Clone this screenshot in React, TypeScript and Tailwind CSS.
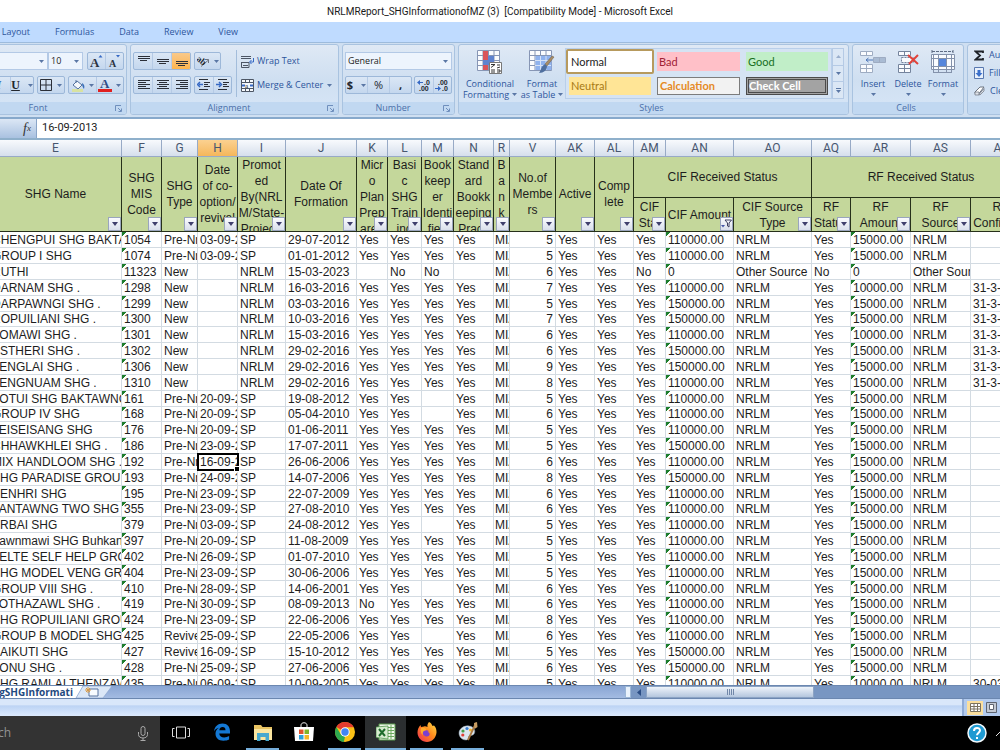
import React from "react";

/* ---------- data ---------- */

type Column = { id: string; width: number };

const columns: Column[] = [
  { id: "E", width: 132 },
  { id: "F", width: 40 },
  { id: "G", width: 36 },
  { id: "H", width: 40 },
  { id: "I", width: 48 },
  { id: "J", width: 71 },
  { id: "K", width: 31 },
  { id: "L", width: 34 },
  { id: "M", width: 32 },
  { id: "N", width: 40 },
  { id: "R", width: 16 },
  { id: "V", width: 46 },
  { id: "AK", width: 39 },
  { id: "AL", width: 39 },
  { id: "AM", width: 32 },
  { id: "AN", width: 68 },
  { id: "AO", width: 78 },
  { id: "AQ", width: 39 },
  { id: "AR", width: 60 },
  { id: "AS", width: 60 },
  { id: "AT", width: 60 },
];

// name, MIS code, type, revival date, formation date, plan/training/bookkeeper/practice flags, members, CIF amount, RF amount, RF date
const source = `CHENGPUI SHG BAKTAWNG|1054|P|03-09-2013|29-07-2012|YYYY|5|110000.00|15000.00|
GROUP I SHG|1074|P|03-09-2013|01-01-2012|YYYY|5|110000.00|15000.00|
RUTHI|11323|N||15-03-2023|-NN-|6|0|0|
DARNAM SHG .|1298|N||16-03-2016|YYYY|7|110000.00|10000.00|31-3-2017
DARPAWNGI SHG .|1299|N||03-03-2016|YYYY|5|150000.00|15000.00|31-3-2017
ROPUILIANI SHG .|1300|N||10-03-2016|YYYY|7|150000.00|15000.00|31-3-2017
ZOMAWI SHG .|1301|N||15-03-2016|YYYY|6|110000.00|10000.00|31-3-2017
ESTHERI SHG .|1302|N||29-02-2016|YYYY|6|150000.00|15000.00|31-3-2017
ZENGLAI SHG .|1306|N||29-02-2016|YYYY|9|150000.00|15000.00|31-3-2017
ZENGNUAM SHG .|1310|N||29-02-2016|YYYY|8|110000.00|15000.00|31-3-2017
ZOTUI SHG BAKTAWNG|161|P|20-09-2013|19-08-2012|YY-Y|5|110000.00|15000.00|
GROUP IV SHG|168|P|20-09-2013|05-04-2010|YY-Y|6|110000.00|15000.00|
LEISEISANG SHG|176|P|20-09-2013|01-06-2011|YYYY|5|110000.00|15000.00|
CHHAWKHLEI SHG .|186|P|23-09-2013|17-07-2011|YYYY|5|150000.00|15000.00|
MIX HANDLOOM SHG .|192|P|16-09-2013|26-06-2006|YYYY|6|110000.00|15000.00|
SHG PARADISE GROUP|193|P|24-09-2013|14-07-2006|YYYY|8|150000.00|15000.00|
BENHRI SHG|195|P|23-09-2013|22-07-2009|YYYY|6|110000.00|15000.00|
LANTAWNG TWO SHG|355|P|23-09-2013|27-08-2010|YYYY|6|110000.00|15000.00|
ERBAI SHG|379|P|03-09-2013|24-08-2012|YY-Y|5|110000.00|15000.00|
Zawnmawi SHG Buhkangkawn|397|P|20-09-2013|11-08-2009|YYYY|5|110000.00|15000.00|
ZELTE SELF HELP GROUP|402|P|26-09-2013|01-07-2010|YYYY|5|110000.00|15000.00|
SHG MODEL VENG GROUP|404|P|23-09-2013|30-06-2006|YYYY|5|110000.00|15000.00|
GROUP VIII SHG .|410|P|28-09-2013|14-06-2001|YY-Y|6|110000.00|15000.00|
LOTHAZAWL SHG .|419|P|30-09-2013|08-09-2013|NYYY|6|110000.00|15000.00|
SHG ROPUILIANI GROUP|424|P|23-09-2013|22-06-2006|YYYY|8|110000.00|15000.00|
GROUP B MODEL SHG|425|R|25-09-2013|22-05-2006|YY-Y|6|110000.00|15000.00|
SAIKUTI SHG|427|R|16-09-2013|15-10-2012|YYYY|5|150000.00|15000.00|
ZONU SHG .|428|P|25-09-2013|27-06-2006|YYYY|6|150000.00|15000.00|
SHG RAMLAI THENZAWL|435|P|06-09-2013|10-09-2005|YYYY|5|110000.00|10000.00|30-03-2017`;

const types: Record<string, string> = { P: "Pre-Nrlm", N: "New", R: "Revived" };
const flags: Record<string, string> = { Y: "Yes", N: "No", "-": "" };

const rows = source.split("\n").map((line) => {
  const [name, code, type, revival, formed, f, members, cif, rf, rfDate] = line.split("|");
  const funded = cif !== "0";
  return [
    name,
    code,
    types[type],
    revival,
    type === "N" ? "NRLM" : "SP",
    formed,
    flags[f[0]],
    flags[f[1]],
    flags[f[2]],
    flags[f[3]],
    "MIZORAM",
    members,
    "Yes",
    "Yes",
    funded ? "Yes" : "No",
    cif,
    funded ? "NRLM" : "Other Source",
    funded ? "Yes" : "No",
    rf,
    funded ? "NRLM" : "Other Source",
    rfDate,
  ];
});

type Head = { lines: string[]; top?: boolean; filtered?: boolean };

const tallHeads: Head[] = [
  { lines: ["SHG Name"] },
  { lines: ["SHG", "MIS", "Code"] },
  { lines: ["SHG", "Type"] },
  { lines: ["Date", "of co-", "option/", "revival"] },
  { lines: ["Promot", "ed", "By(NRL", "M/State-", "Project)"], top: true },
  { lines: ["Date Of", "Formation"] },
  { lines: ["Micr", "o", "Plan", "Prep", "ared"], top: true },
  { lines: ["Basi", "c", "SHG", "Train", "ing"], top: true },
  { lines: ["Book", "keep", "er", "Identi", "fied"], top: true },
  { lines: ["Stand", "ard", "Bookk", "eeping", "Practi"], top: true },
  { lines: ["B", "a", "n", "k", "N"], top: true },
  { lines: ["No.of", "Membe", "rs"] },
  { lines: ["Active"] },
  { lines: ["Comp", "lete"] },
];

const shortHeads: Head[] = [
  { lines: ["CIF", "Stat"] },
  { lines: ["CIF Amount"], filtered: true },
  { lines: ["CIF Source", "Type"] },
  { lines: ["RF", "Status"] },
  { lines: ["RF", "Amount"] },
  { lines: ["RF", "Source"] },
  { lines: ["RF", "Confirmati"] },
];

/* ---------- small pieces ---------- */

function Caret({ className = "" }: { className?: string }) {
  return (
    <svg className={`shrink-0 ${className}`} width="5" height="3" viewBox="0 0 5 3" aria-hidden="true">
      <path d="M0 0h5L2.5 3z" fill="#5a77a5" />
    </svg>
  );
}

function Launcher() {
  return (
    <svg width="7" height="7" viewBox="0 0 7 7" fill="none" stroke="#6f8fbd" aria-hidden="true">
      <path d="M.5 6V.5H6M3 3l3 3M6.5 3.5v3h-3" />
    </svg>
  );
}

function Group({
  title,
  launcher,
  className = "",
  children,
}: {
  title: string;
  launcher?: boolean;
  className?: string;
  children: React.ReactNode;
}) {
  return (
    <section
      className={`flex shrink-0 flex-col overflow-hidden rounded-[3px] border border-[#a9c3e0] bg-linear-to-b from-[#dfe9f5] via-[#cfdff1] to-[#d7e6f7] ${className}`}
    >
      <div className="flex min-h-0 flex-1">{children}</div>
      <div className="flex h-3 shrink-0 items-center bg-[#c1d8f1] pr-1 text-[#4a6fa9]">
        <h2 className="flex-1 text-center leading-3">{title}</h2>
        {launcher && (
          <button aria-label={`${title} options`}>
            <Launcher />
          </button>
        )}
      </div>
    </section>
  );
}

function Box({ className = "", children }: { className?: string; children: React.ReactNode }) {
  return (
    <div
      className={`flex h-[18px] items-stretch divide-x divide-[#b5cae5] overflow-hidden rounded-[2px] border border-[#9db8d9] bg-linear-to-b from-[#dbe7f5] to-[#c4d7ee] ${className}`}
    >
      {children}
    </div>
  );
}

function Tool({
  label,
  active,
  children,
}: {
  label: string;
  active?: boolean;
  children: React.ReactNode;
}) {
  return (
    <button
      aria-label={label}
      className={`flex flex-1 items-center justify-center gap-1 ${
        active ? "bg-linear-to-b from-[#f9c98a] to-[#fdb54c]" : ""
      }`}
    >
      {children}
    </button>
  );
}

function Combo({ label, value, className = "" }: { label: string; value: string; className?: string }) {
  return (
    <div className={`relative ${className}`}>
      <select
        aria-label={label}
        className="h-[18px] w-full appearance-none border border-[#b3c9e6] bg-[#edf4fd] px-[2px] leading-4 text-[#1c1c1c]"
      >
        <option>{value}</option>
      </select>
      <Caret className="absolute top-2 right-1" />
    </div>
  );
}

function Lines({ d }: { d: string }) {
  return (
    <svg width="13" height="12" viewBox="0 0 13 12" fill="none" stroke="#2b2f38" aria-hidden="true">
      <path d={d} />
    </svg>
  );
}

function Indent({ flip }: { flip?: boolean }) {
  return (
    <svg width="13" height="12" viewBox="0 0 13 12" fill="none" aria-hidden="true">
      <path d="M2 .5h9M7 3.5h6M7 5.5h4M7 7.5h6M2 10.5h9" stroke="#2b2f38" />
      <path d={flip ? "M0 5.5h4M3 3l2.5 2.5L3 8" : "M6 5.5H2M3 3L.5 5.500 3 8"} stroke="#3568c4" strokeWidth="1.5" />
    </svg>
  );
}

/* ---------- ribbon ---------- */

function FontGroup() {
  return (
    <Group title="Font" launcher className="-ml-[40px] w-[167px]">
      <div className="flex flex-1 flex-col gap-[6px] pt-[7px] pr-[2px]">
        <div className="flex justify-end">
          <Combo label="Font name" value="" className="w-[80px]" />
          <Combo label="Font size" value="10" className="mr-1 w-[35px]" />
          <Box className="w-[37px]">
            <Tool label="Increase font size">
              <svg width="13" height="14" viewBox="0 0 13 14" aria-hidden="true">
                <text x="0" y="13" fontSize="13" fontWeight="700" fontFamily="Liberation Serif, serif" fill="#2b3342">A</text>
                <path d="M8.500 3.500L10.500 1l2 2.500z" fill="#3568c4" />
              </svg>
            </Tool>
            <Tool label="Decrease font size">
              <svg width="13" height="14" viewBox="0 0 13 14" aria-hidden="true">
                <text x="1" y="13" fontSize="10" fontWeight="700" fontFamily="Liberation Serif, serif" fill="#2b3342">A</text>
                <path d="M8 1h4l-2 2.500z" fill="#3568c4" />
              </svg>
            </Tool>
          </Box>
        </div>
        <div className="flex justify-end gap-[3px]">
          <Box className="w-[70px]">
            <Tool label="Bold"><b className="font-['Liberation_Serif',serif] text-xs">B</b></Tool>
            <Tool label="Italic"><i className="font-['Liberation_Serif',serif] text-xs">I</i></Tool>
            <Tool label="Underline">
              <b className="font-['Liberation_Serif',serif] text-xs leading-none text-[#22262e] underline">U</b>
              <Caret className="ml-1" />
            </Tool>
          </Box>
          <Box className="w-7">
            <Tool label="Borders">
              <svg width="12" height="12" viewBox="0 0 12 12" fill="none" stroke="#2b2f38" aria-hidden="true">
                <path d="M.5.5h11v11H.5zM6 0v12M0 6h12" />
              </svg>
              <Caret className="ml-px" />
            </Tool>
          </Box>
          <Box className="w-14">
            <Tool label="Fill colour">
              <svg width="14" height="13" viewBox="0 0 14 13" aria-hidden="true">
                <path d="M1 10h11v3H1z" fill="#d8e2a0" />
                <path d="M2 6l4-4 5 4-4 4z" fill="#f4f7fb" stroke="#53729e" />
                <path d="M5 4V1" stroke="#53729e" />
                <path d="M11 4c2 1 3 3 2 6-1-1-2-3-2-6z" fill="#3a6fb8" />
              </svg>
              <Caret />
            </Tool>
            <Tool label="Font colour">
              <svg width="14" height="14" viewBox="0 0 14 14" aria-hidden="true">
                <text x="2" y="10" fontSize="13" fontWeight="700" fontFamily="Liberation Serif, serif" fill="#2f4c86">A</text>
                <path d="M0 11h14v3H0z" fill="#e02020" />
              </svg>
              <Caret />
            </Tool>
          </Box>
        </div>
      </div>
    </Group>
  );
}

function AlignmentGroup() {
  return (
    <Group title="Alignment" launcher className="w-[209px]">
      <div className="flex flex-col gap-[6px] pt-[7px] pl-[2px]">
        <div className="flex gap-[3px]">
          <Box className="w-[58px]">
            <Tool label="Top align"><Lines d="M1 1.500h12M1 3.500h12M3 5.500h7" /></Tool>
            <Tool label="Middle align"><Lines d="M1 4.500h12M1 6.500h12M3 8.500h7" /></Tool>
            <Tool label="Bottom align" active><Lines d="M1 6.500h12M1 8.500h12M3 10.500h7" /></Tool>
          </Box>
          <Box className="w-[27px]">
            <Tool label="Orientation">
              <svg width="13" height="12" viewBox="0 0 13 12" fill="none" aria-hidden="true">
                <path d="M4 11.500l7.500-6.500M8 4.500h3.500V8" stroke="#6d7380" />
                <text x="0" y="8" fontSize="9" fontWeight="700" fontFamily="Liberation Serif, serif" fill="#22262e" transform="rotate(38 4 5)">ab</text>
              </svg>
              <Caret />
            </Tool>
          </Box>
        </div>
        <div className="flex gap-[3px]">
          <Box className="w-[58px]">
            <Tool label="Align left"><Lines d="M1 1.500h12M1 3.500h8M1 5.500h12M1 7.500h8M1 9.500h12" /></Tool>
            <Tool label="Centre"><Lines d="M1 1.500h12M3 3.500h8M1 5.500h12M3 7.500h8M1 9.500h12" /></Tool>
            <Tool label="Align right"><Lines d="M1 1.500h12M5 3.500h8M1 5.500h12M5 7.500h8M1 9.500h12" /></Tool>
          </Box>
          <Box className="w-[38px]">
            <Tool label="Decrease indent"><Indent /></Tool>
            <Tool label="Increase indent"><Indent flip /></Tool>
          </Box>
        </div>
      </div>
      <div className="mx-1 my-[5px] border-l border-[#a3bddb]" />
      <div className="flex flex-col gap-[6px] pt-[7px]">
        <button className="flex h-[18px] items-center gap-[3px]">
          <svg width="13" height="13" viewBox="0 0 13 13" fill="none" aria-hidden="true">
            <path d="M0 1.500h10M0 3.500h10M0 7.500h8v5H.5v-5M2 10.500h5" stroke="#4d5665" />
            <path d="M12.500 3v4H9M10.500 5L8.500 7l2 2" stroke="#3568c4" />
          </svg>
          Wrap Text
        </button>
        <button className="flex h-[18px] items-center gap-[3px]">
          <svg width="13" height="13" viewBox="0 0 13 13" fill="none" aria-hidden="true">
            <path d="M.5.5h12v12H.5zM.5 3.500h12M.5 9.500h12M4.500 0v3M8.500 0v3M4.500 10v3M8.500 10v3" stroke="#4d5665" fill="#f6f9fd" />
            <path d="M1 6.500h3M12 6.500H9" stroke="#3568c4" strokeWidth="2" />
            <text x="4" y="9" fontSize="7" fontFamily="Liberation Serif, serif" fill="#111">a</text>
          </svg>
          Merge &amp; Center
          <Caret className="ml-px" />
        </button>
      </div>
    </Group>
  );
}

function NumberGroup() {
  return (
    <Group title="Number" launcher className="w-[113px]">
      <div className="flex flex-1 flex-col gap-[6px] px-[2px] pt-[7px]">
        <Combo label="Number format" value="General" className="w-full" />
        <div className="flex justify-between">
          <Box className="w-[67px] text-[11px] font-bold text-[#22262e]">
            <Tool label="Currency">
              $<Caret className="ml-1" />
            </Tool>
            <Tool label="Percent"><span className="font-normal">%</span></Tool>
            <Tool label="Comma">,</Tool>
          </Box>
          <Box className="w-[38px]">
            <Tool label="Increase decimal">
              <svg width="14" height="13" viewBox="0 0 14 13" aria-hidden="true">
                <g fontSize="7" fontWeight="700" fontFamily="Liberation Sans, sans-serif" fill="#22262e">
                  <text x="7" y="6">.0</text>
                  <text x="2" y="12">.00</text>
                </g>
                <path d="M0 3.500L3 1v5zM3 3h3v1H3z" fill="#3568c4" />
              </svg>
            </Tool>
            <Tool label="Decrease decimal">
              <svg width="14" height="13" viewBox="0 0 14 13" aria-hidden="true">
                <g fontSize="7" fontWeight="700" fontFamily="Liberation Sans, sans-serif" fill="#22262e">
                  <text x="3" y="6">.00</text>
                  <text x="7" y="12">.0</text>
                </g>
                <path d="M6 9.500L3 7v5zM0 9h3v1H0z" fill="#3568c4" />
              </svg>
            </Tool>
          </Box>
        </div>
      </div>
    </Group>
  );
}

function BigButton({
  icon,
  lines,
  className = "",
}: {
  icon: React.ReactNode;
  lines: [string, string];
  className?: string;
}) {
  return (
    <button className={`flex flex-col items-center pt-[5px] leading-[11px] whitespace-nowrap ${className}`}>
      {icon}
      <span className="mt-1 block">{lines[0]}</span>
      <span className="flex min-h-[10px] items-center gap-[3px]">
        {lines[1]}
        <Caret />
      </span>
    </button>
  );
}

const gridPath = "M.5.5h22v20H.5zM.5 5.500h22M.5 10.500h22M.5 15.500h22M6 .5v20M11.500 .5v20M17 .5v20";

function StylesGroup() {
  return (
    <Group title="Styles" className="w-[391px]">
      <BigButton
        className="w-[62px]"
        lines={["Conditional", "Formatting"]}
        icon={
          <svg width="26" height="24" viewBox="0 0 26 24" aria-hidden="true">
            <path d={gridPath} fill="#fbfcfe" stroke="#8796b5" />
            <path d="M6 1h5v9H6zM6 15h5v5H6z" fill="#d9545a" />
            <path d="M6 10h11v5H6zM11 6h6v4h-6z" fill="#5f83cf" />
            <path d="M12.500 12.500h12v11h-12z" fill="#fff" stroke="#777" />
            <path d="M14 14.500h4l-4 3M14 20h4M14 22h4M20 15h3M20 18l3-1M20 20h3v2h-3" stroke="#333" fill="none" />
          </svg>
        }
      />
      <BigButton
        className="w-[42px]"
        lines={["Format", "as Table"]}
        icon={
          <svg width="26" height="24" viewBox="0 0 26 24" aria-hidden="true">
            <path d={gridPath} fill="#fbfcfe" stroke="#8796b5" />
            <path d="M6.500 6h16v14h-16z" fill="#8fb2ee" />
            <path d="M6 10.500h16M6 15.500h16M11.500 6v14M17 6v14" stroke="#d5e2f8" />
            <path d="M25 7l-7 9-2-2 7-8z" fill="#a88d67" stroke="#6f5d42" strokeWidth=".5" />
            <path d="M18 16c0 4-3 7-8 7 2-2 2-7 6-9z" fill="#4f6f9f" />
          </svg>
        }
      />
      <div className="my-[3px] ml-[2px] flex">
        <div className="grid grid-cols-[88px_89px_88px] grid-rows-2 border border-[#b9cfea] bg-[#d5e3f3] font-[Lato,'Open_Sans',sans-serif] text-[11px] leading-none">
          <button className="rounded-[2px] border-2 border-[#b79a5d] bg-white px-[3px] text-left text-[#222]">Normal</button>
          <button className="m-[3px] bg-[#ffc0c8] px-[2px] text-left text-[#a02035]">Bad</button>
          <button className="m-[3px] bg-[#c1eec8] px-[2px] text-left text-[#18701f]">Good</button>
          <button className="m-[3px] bg-[#ffe596] px-[2px] text-left text-[#a87a14]">Neutral</button>
          <button className="m-[3px] border border-[#7c7c7c] bg-[#f2f2f2] px-[2px] text-left font-bold text-[#e58a25]">Calculation</button>
          <button className="m-[3px] border-3 border-double border-[#4b4b4b] bg-[#a3a3a3] text-left font-bold text-white">Check Cell</button>
        </div>
        <div className="flex w-3 flex-col divide-y divide-[#b5cae5] border border-[#b5cae5] bg-[#dbe7f5]">
          <Tool label="Previous styles"><Caret className="rotate-180 opacity-50" /></Tool>
          <Tool label="Next styles"><Caret /></Tool>
          <button aria-label="More styles" className="flex flex-1 flex-col items-center justify-center gap-px">
            <span className="h-px w-[5px] bg-[#5a77a5]" />
            <Caret />
          </button>
        </div>
      </div>
    </Group>
  );
}

function CellsGroup() {
  return (
    <Group title="Cells" className="w-[112px]">
      <div className="flex flex-1 justify-center">
        <BigButton
          className="w-[35px]"
          lines={["Insert", ""]}
          icon={
            <svg width="26" height="24" viewBox="0 0 26 24" fill="#fafcff" stroke="#9eacc2" aria-hidden="true">
              <path d="M.5 1.500h12v4H.5zM6.500 1.500v4M.5 14.500h12v8H.5zM6.500 14.500v8M.5 18.500h12" />
              <path d="M13.500 7.500h12v5h-12zM19.500 7.500v5" fill="#a9bbd3" />
              <path d="M13 10H6M8.500 8L6 10l2.500 2" stroke="#4d76b8" fill="none" />
            </svg>
          }
        />
        <BigButton
          className="w-[35px]"
          lines={["Delete", ""]}
          icon={
            <svg width="26" height="24" viewBox="0 0 26 24" fill="#fafcff" stroke="#75849d" aria-hidden="true">
              <path d="M3.500 1.500h12v4h-12zM9.500 1.500v4M3.500 14.500h12v8h-12zM9.500 14.500v8M3.500 18.500h12" />
              <path d="M6.500 7.500h12v5h-12z" strokeDasharray="2 1" />
              <path d="M13 5l10 9M23 5l-9 9" stroke="#e0433b" strokeWidth="2" />
            </svg>
          }
        />
        <BigButton
          className="w-[35px]"
          lines={["Format", ""]}
          icon={
            <svg width="26" height="24" viewBox="0 0 26 24" fill="#fafcff" stroke="#8492ab" aria-hidden="true">
              <path d="M2 1.500h21M2 0v3M23 0v3" stroke="#5d6b83" strokeDasharray="3 1" />
              <path d="M1.500 4.500h23v15h-23zM3.500 4.500v18M8.500 4.500v18M16.500 4.500v18M21.500 4.500v18M1.500 8.500h23M1.500 16.500h23M3 22.500h19" />
              <path d="M9 9h7v7H9z" fill="#5586dc" stroke="none" />
            </svg>
          }
        />
      </div>
    </Group>
  );
}

function EditingGroup() {
  const item = "flex h-[18px] items-center gap-[5px]";
  return (
    <Group title="Editing" className="w-[160px]">
      <div className="flex flex-col pt-[1px] pl-[6px] text-[#2d559c]">
        <button className={item}>
          <svg width="10" height="11" viewBox="0 0 10 11" fill="none" stroke="#1f2228" strokeWidth="1.800" aria-hidden="true">
            <path d="M9 3V1.500H1.500L6 5.500 1.500 9.500H9V8" />
          </svg>
          AutoSum
        </button>
        <button className={item}>
          <svg width="10" height="12" viewBox="0 0 10 12" aria-hidden="true">
            <path d="M.5.5h9v11h-9z" fill="#e8f0fb" stroke="#5878b0" />
            <path d="M3.500 3h3v3h2L5 10 1.500 6h2z" fill="#3b70cb" />
          </svg>
          Fill
        </button>
        <button className={item}>
          <svg width="11" height="10" viewBox="0 0 11 10" aria-hidden="true">
            <path d="M1 6l5-5h4L5 7.500H1z" fill="#fff" stroke="#6d7480" />
            <path d="M1 6h4v3H1zM5 8.500l5-6V5L6 9z" fill="#dfe3ea" stroke="#6d7480" strokeWidth=".7" />
          </svg>
          Clear
        </button>
      </div>
    </Group>
  );
}

/* ---------- grid ---------- */

function FilterButton({ filtered }: { filtered?: boolean }) {
  return (
    <button
      aria-label="Filter"
      className="absolute right-0 bottom-0 flex h-[14px] w-[13px] items-center justify-center border border-[#9aa5bd] bg-linear-to-b from-[#fafbfe] to-[#d9dfeb]"
    >
      {filtered ? (
        <svg width="11" height="10" viewBox="0 0 11 10" aria-hidden="true">
          <path d="M4 1h6.500L8 4v4l-1.500-1V4z" fill="#f4f6fb" stroke="#3c3f60" />
          <path d="M0 6h4L2 8.500z" fill="#4557a6" />
        </svg>
      ) : (
        <svg width="6" height="4" viewBox="0 0 6 4" aria-hidden="true">
          <path d="M0 0h6L3 4z" fill="#3f3f6c" />
        </svg>
      )}
    </button>
  );
}

function HeadCell({ head, tall }: { head: Head; tall?: boolean }) {
  return (
    <th
      scope="col"
      rowSpan={tall ? 2 : 1}
      className="relative border-r border-b border-[#26301a] bg-[#c4d79b] p-0 font-normal"
    >
      <div
        className={`flex flex-col items-center overflow-hidden leading-4 whitespace-nowrap ${
          tall ? "h-[74px]" : "h-[33px]"
        } ${head.top ? "justify-start" : "justify-center"}`}
      >
        {head.lines.map((line, i) => (
          <span key={i} className="shrink-0">
            {line}
          </span>
        ))}
      </div>
      <FilterButton filtered={head.filtered} />
    </th>
  );
}

const SELECTED_ROW = 14;
const SELECTED_COL = 3;
const BANK_COL = 10;
const MEMBERS_COL = 11;
const flagged = new Set([1, 15, 18]);

function cellPadding(col: number) {
  if (col === MEMBERS_COL) return "pr-[2px] text-right";
  return col === BANK_COL ? "pl-px" : "pl-[2px]";
}

function Sheet() {
  return (
    <main className="min-h-0 flex-1 overflow-hidden bg-white">
      <table className="-ml-[10px] w-[1041px] table-fixed border-separate border-spacing-0 font-['Liberation_Sans',Arial,sans-serif] text-xs text-[#1d1d1d]">
        <colgroup>
          {columns.map((c) => (
            <col key={c.id} style={{ width: c.width }} />
          ))}
        </colgroup>
        <thead>
          <tr>
            {columns.map((c, i) => (
              <th
                key={c.id}
                className={`h-[17px] border-r border-b border-[#98aac6] p-0 font-[Roboto,sans-serif] text-xs leading-4 font-normal text-[#47566f] ${
                  i === SELECTED_COL
                    ? "bg-linear-to-b from-[#fbd190] to-[#f5b75a]"
                    : "bg-linear-to-b from-[#f8fafd] to-[#d6dfec]"
                }`}
              >
                {c.id}
              </th>
            ))}
          </tr>
          <tr>
            {tallHeads.map((h, i) => (
              <HeadCell key={i} head={h} tall />
            ))}
            <th colSpan={3} scope="colgroup" className="h-[41px] border-r border-b border-[#26301a] bg-[#c4d79b] p-0 font-normal">
              CIF Received Status
            </th>
            <th colSpan={4} scope="colgroup" className="h-[41px] border-r border-b border-[#26301a] bg-[#c4d79b] p-0 font-normal">
              RF Received Status
            </th>
          </tr>
          <tr>
            {shortHeads.map((h, i) => (
              <HeadCell key={i} head={h} />
            ))}
          </tr>
        </thead>
        <tbody>
          {rows.map((cells, r) => (
            <tr key={r} className={r % 6 === 5 ? "h-[15px]" : "h-4"}>
              {cells.map((text, c) => {
                const selected = r === SELECTED_ROW && c === SELECTED_COL;
                return (
                  <td
                    key={c}
                    className={`border-r border-b border-[#d3dbe2] p-0 leading-[14px] whitespace-nowrap ${cellPadding(c)} ${
                      flagged.has(c) ? "bg-[linear-gradient(135deg,#1d7d2c_3px,transparent_3px)]" : ""
                    } ${selected ? "relative outline-2 -outline-offset-1 outline-black" : "overflow-hidden"}`}
                  >
                    {selected ? (
                      <>
                        <div className="overflow-hidden">{text}</div>
                        <span className="absolute -right-[2px] -bottom-[2px] size-1 bg-black outline-1 outline-white" />
                      </>
                    ) : (
                      text
                    )}
                  </td>
                );
              })}
            </tr>
          ))}
        </tbody>
      </table>
    </main>
  );
}

/* ---------- task bar ---------- */

function TaskButton({
  label,
  open,
  current,
  children,
}: {
  label: string;
  open?: boolean;
  current?: boolean;
  children: React.ReactNode;
}) {
  return (
    <button
      aria-label={label}
      className={`flex w-[41px] shrink-0 flex-col items-center ${current ? "bg-[#2b2e30]" : ""}`}
    >
      <span className="flex flex-1 items-center">{children}</span>
      <span className={`h-[2px] ${current ? "w-full" : "w-[33px]"} ${open ? "bg-[#76aedb]" : ""}`} />
    </button>
  );
}

function Taskbar() {
  return (
    <footer className="flex h-[34px] shrink-0 overflow-hidden bg-black">
      <label className="flex w-40 shrink-0 items-center overflow-hidden bg-[#333333]">
        <input
          aria-label="Search"
          placeholder="Type here to search"
          className="-ml-[110px] w-[121px] bg-transparent text-right text-xs text-white placeholder:text-[#929292]"
        />
        <svg className="mr-3 ml-auto" width="10" height="15" viewBox="0 0 10 15" fill="none" stroke="#a9a9a9" aria-hidden="true">
          <rect x="3" y=".5" width="4" height="9" rx="2" />
          <path d="M.5 6v2.500c0 2 1.500 3.500 4.500 3.500s4.500-1.500 4.500-3.500V6M5 12v2.500M2.500 14.500h5" />
        </svg>
      </label>
      <TaskButton label="Task view">
        <svg width="18" height="13" viewBox="0 0 18 13" fill="none" stroke="#dcdcdc" aria-hidden="true">
          <path d="M4.500 1h9v11h-9zM2.500 2.500H.5v8h2M15.500 2.500h2v8h-2" />
        </svg>
      </TaskButton>
      <TaskButton label="Edge">
        <svg width="18" height="18" viewBox="0 0 18 18" aria-hidden="true">
          <path
            d="M1 8.500C1.500 3.500 4.800.5 9.500.5c4.800 0 7.500 3.200 7.500 8v2H6.200c.2 2.700 2.300 3.900 5 3.900 1.900 0 3.500-.5 4.900-1.300v3.500c-1.500.8-3.400 1.200-5.600 1.200-5 0-8-2.600-8-7.200 0-2.500 1.300-4.600 3.500-5.900C3.700 5 2 6.400 1 8.500zm5.300-1.300h6.200c0-2-1-3.200-2.900-3.200-1.800 0-3 1.200-3.300 3.200z"
            fill="#1478d4"
          />
        </svg>
      </TaskButton>
      <TaskButton label="File Explorer" open>
        <svg width="18" height="17" viewBox="0 0 18 17" aria-hidden="true">
          <path d="M0 1h7l1.500 2H18v13H0z" fill="#e9c463" />
          <path d="M0 5h18v11H0z" fill="#fbe6a0" />
          <path d="M3 9h12v8h-3.500v-4h-5v4H3z" fill="#48a9cf" />
        </svg>
      </TaskButton>
      <TaskButton label="Store">
        <svg width="20" height="20" viewBox="0 0 20 20" aria-hidden="true">
          <path d="M7 5V3c0-3 6-3 6 0v2" fill="none" stroke="#e8e8e8" />
          <path d="M0 5h20l-1 14H1z" fill="#fff" />
          <path d="M5 7.500h4.500V12H5z" fill="#e0532c" />
          <path d="M10.500 7.500H15V12h-4.500z" fill="#80b52a" />
          <path d="M5 13h4.500v4.500H5z" fill="#2ba1dc" />
          <path d="M10.500 13H15v4.500h-4.500z" fill="#f5b728" />
        </svg>
      </TaskButton>
      <TaskButton label="Chrome" open>
        <svg width="20" height="20" viewBox="0 0 20 20" aria-hidden="true">
          <circle cx="10" cy="10" r="10" fill="#fbc116" />
          <path d="M10 10L1.340 5A10 10 0 0 1 18.660 5z" fill="#e33b2e" />
          <path d="M1.340 5L5.900 12.500 10 14.700 8.800 19.900A10 10 0 0 1 1.340 5z" fill="#2da94f" />
          <path d="M10 5.300h8.800L10 10z" fill="#fbc116" />
          <circle cx="10" cy="10" r="4.700" fill="#fff" />
          <circle cx="10" cy="10" r="3.700" fill="#4285f4" />
        </svg>
      </TaskButton>
      <TaskButton label="Excel" open current>
        <svg width="20" height="19" viewBox="0 0 20 19" aria-hidden="true">
          <path d="M3 1h16v16H3z" fill="#f0f7ec" stroke="#5b9b4f" />
          <path d="M12 4.500h6M12 7.500h6M12 10.500h6M12 13.500h6M15 2v14" stroke="#69a85c" />
          <path d="M0 4l12-1v13L0 14.500z" fill="#d7ecd0" stroke="#3f8a3c" strokeWidth=".7" />
          <path d="M3 6l6 7M9 6l-6 7" stroke="#1d6b2b" strokeWidth="2" />
        </svg>
      </TaskButton>
      <TaskButton label="Firefox" open>
        <svg width="20" height="20" viewBox="0 0 20 20" aria-hidden="true">
          <defs>
            <linearGradient id="fox" x1="1" y1="0" x2="0" y2="1">
              <stop offset="0" stopColor="#ffe14a" />
              <stop offset=".45" stopColor="#ff8a1c" />
              <stop offset="1" stopColor="#ee2a55" />
            </linearGradient>
          </defs>
          <path
            d="M12 0c2 1 3 2.500 3.500 4l1.500-.5c2 2 2.700 4.500 2.500 7C19 16 15 20 10 20S.5 16 .5 10.500C.5 8 1.500 5 3.500 3l.5 2 3-.500C8 4 9.500 4.500 10.500 5 10 3 11 1 12 0z"
            fill="url(#fox)"
          />
          <path d="M6 9c2-1 4-1 6 0l-1.500 1c3 0 3 4.500-.5 4.500-3 0-5-2.500-4-5.500z" fill="#7b3fd0" />
          <path d="M4 6c2-1 4-.5 5 1 1 1-1 1.500-2 2-2 1-1 4-1 4-2-1-3-4-2-7z" fill="#ffab2b" />
        </svg>
      </TaskButton>
      <TaskButton label="Paint" open>
        <svg width="20" height="20" viewBox="0 0 20 20" aria-hidden="true">
          <path d="M1 11c0-4 5-8 10-7 5 .500 7 5 5 8-1.500 2-4 1-5 2-1 1.500 0 4-3 4-4 0-7-3-7-7z" fill="#dce6ef" stroke="#8fa3b5" strokeWidth=".5" />
          <circle cx="5" cy="9" r="1.600" fill="#45a04b" />
          <circle cx="9" cy="6.500" r="1.600" fill="#3a7fd0" />
          <circle cx="4.800" cy="13" r="1.600" fill="#e0413a" />
          <circle cx="12.500" cy="8" r="1.500" fill="#f1b52b" />
          <path d="M18 1L10 18" stroke="#a97943" strokeWidth="1.800" />
          <path d="M16 1l3-1 .5 5-3 2z" fill="#c79c62" />
        </svg>
      </TaskButton>
      <div className="-mr-2 ml-auto flex shrink-0 items-center gap-2">
        <button aria-label="Help">
          <svg width="20" height="20" viewBox="0 0 20 20" aria-hidden="true">
            <circle cx="10" cy="10" r="9" fill="#1e9ad2" stroke="#f2f8fc" strokeWidth="1.500" />
            <path d="M7 8c0-4 6-4 6-.5 0 2-3 2.500-3 4.800M10 14v2" stroke="#fff" strokeWidth="2" fill="none" />
          </svg>
        </button>
        <button aria-label="Show hidden icons">
          <svg width="13" height="8" viewBox="0 0 13 8" fill="none" stroke="#e4e4e4" aria-hidden="true">
            <path d="M1 7l5.500-5.500L12 7" />
          </svg>
        </button>
      </div>
    </footer>
  );
}

/* ---------- page ---------- */

export default function App() {
  return (
    <div className="flex h-screen w-full flex-col overflow-hidden bg-[#bfdbff] font-['Open_Sans','Noto_Sans',sans-serif] text-[9px] text-[#2d559c]">
      <header className="flex h-[22px] shrink-0 items-center justify-center bg-white text-[#1a1a1a]">
        <h1 className="font-[Roboto,sans-serif] text-[10px] whitespace-pre">NRLMReport_SHGInformationofMZ (3)  [Compatibility Mode] - Microsoft Excel</h1>
      </header>

      <nav className="-ml-[21px] flex h-5 shrink-0 items-center gap-[25px]">
        <a href="#layout">Page Layout</a>
        <a href="#formulas">Formulas</a>
        <a href="#data">Data</a>
        <a href="#review">Review</a>
        <a href="#view">View</a>
      </nav>

      <div className="flex h-[77px] shrink-0 gap-[3px] overflow-hidden border-t border-b-2 border-[#9dbbdc] border-b-[#87a9cc] bg-[#cfdff1] pt-px pb-[2px]">
        <FontGroup />
        <AlignmentGroup />
        <NumberGroup />
        <StylesGroup />
        <CellsGroup />
        <EditingGroup />
      </div>

      <div className="flex h-[19px] shrink-0 bg-white">
        <div className="flex w-[37px] shrink-0 items-center justify-end border-r border-[#8aa5c8] bg-linear-to-b from-[#dce7f5] to-[#a9c1e0] pr-[5px] font-['Liberation_Serif',serif] text-sm leading-none text-[#333] italic">
          f<span className="text-[9px]">x</span>
        </div>
        <input
          aria-label="Formula"
          defaultValue="16-09-2013"
          className="min-w-0 flex-1 px-[5px] font-[Roboto,sans-serif] text-[11px] text-[#1a1a1a]"
        />
      </div>
      <div className="h-[2px] shrink-0 bg-[#8fb0cb]" />

      <Sheet />

      <div className="flex h-[14px] shrink-0 overflow-hidden border-y border-[#6b87b0] bg-linear-to-b from-[#89a5d3] to-[#a3bbe2]">
        <button className="flex w-[75px] shrink-0 justify-end bg-white pr-[2px] text-[10px] leading-3 font-bold whitespace-nowrap text-[#1f4a80]">
          <span className="shrink-0">ReportingSHGInformati</span>
        </button>
        <button aria-label="Insert worksheet" className="shrink-0">
          <svg width="37" height="12" viewBox="0 0 37 12" aria-hidden="true">
            <path d="M0 0h8L1 12H0z" fill="#fff" />
            <path d="M8 0h29l-9 12H1z" fill="#dbe7f7" stroke="#8aa5cf" strokeWidth=".7" />
            <path d="M14 3h9v7h-9z" fill="#f7fbff" stroke="#56739f" />
            <path d="M13 1v6M10 4h6M11 2l4 4M15 2l-4 4" stroke="#d99a45" />
          </svg>
        </button>
        <div className="ml-auto flex w-[375px] shrink-0 bg-[#7896c2]">
          <div className="w-[6px] border border-[#9bb6d6] bg-[#e9f2fc]" />
          <button aria-label="Scroll left" className="flex w-[15px] items-center justify-center">
            <svg width="4" height="7" viewBox="0 0 4 7" aria-hidden="true">
              <path d="M4 0v7L0 3.500z" fill="#2b4d84" />
            </svg>
          </button>
          <div className="flex w-[168px] items-center justify-center gap-px border border-[#8ba3c4] bg-linear-to-b from-[#eff4fa] to-[#b4c6de]">
            <span className="h-[6px] w-px bg-[#7187a8]" />
            <span className="h-[6px] w-px bg-[#7187a8]" />
            <span className="h-[6px] w-px bg-[#7187a8]" />
            <span className="h-[6px] w-px bg-[#7187a8]" />
          </div>
        </div>
      </div>

      <div className="flex h-[17px] shrink-0 justify-end bg-linear-to-b from-[#d9e7fa] from-35% via-[#bcd3f4] via-40% to-[#dceafd]">
        <div className="flex w-[38px] items-center border-l-2 border-[#8fabd6] bg-[#b3cbee] pl-[3px]">
          <button aria-label="Normal view" className="flex h-[14px] w-4 shrink-0 items-center justify-center bg-[#fbdf9d]">
            <svg width="11" height="9" viewBox="0 0 11 9" fill="#fff" stroke="#7b7360" aria-hidden="true">
              <path d="M.5.5h10v8H.5zM.5 3.500h10M.5 6h10M4 .5v8M7.500 .5v8" />
            </svg>
          </button>
          <button aria-label="Page layout view" className="flex h-[14px] w-4 shrink-0 items-center justify-center">
            <svg width="11" height="11" viewBox="0 0 11 11" stroke="#5d6470" aria-hidden="true">
              <path d="M.5.5h10v10H.5z" fill="#c3c9d3" />
              <path d="M3.500 2.500h4v5h-4z" fill="#fff" />
            </svg>
          </button>
        </div>
      </div>

      <Taskbar />
    </div>
  );
}
